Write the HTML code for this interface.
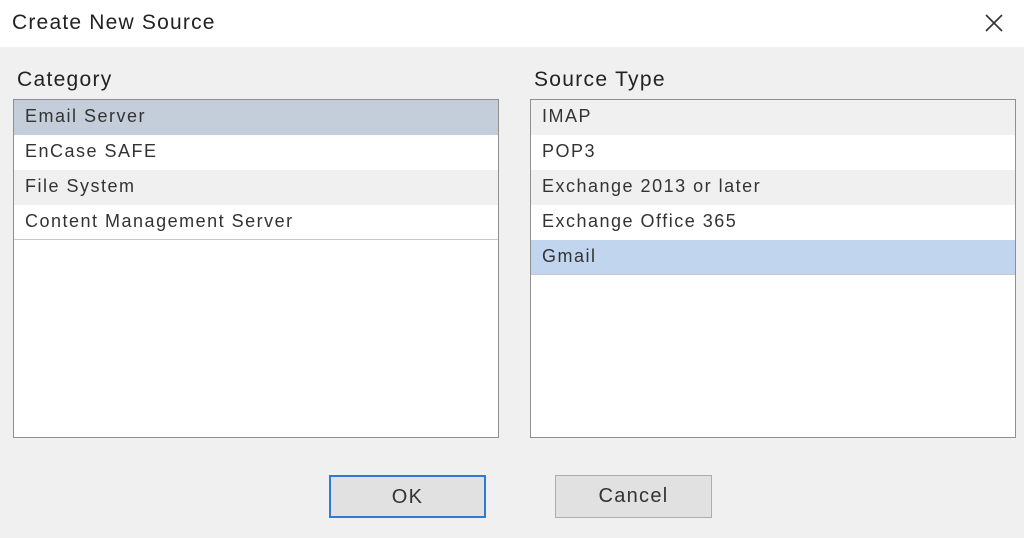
<!DOCTYPE html>
<html><head><style>
body{margin:0;width:1024px;height:538px;background:#f0f0f0;font-family:"Liberation Sans",sans-serif;color:#333;position:relative;overflow:hidden}
.title{position:absolute;left:0;top:0;width:1024px;height:47px;background:#fff}
.title span{position:absolute;left:12px;top:11px;font-size:21px;color:#222;letter-spacing:1.2px}
.x{position:absolute;left:983px;top:12px}
.lbl{position:absolute;font-size:21px;top:68px;color:#222;letter-spacing:1.3px}
.box{position:absolute;top:99px;height:339px;background:#fff;border:1px solid #8f8f8f;box-sizing:border-box}
.row{height:35px;line-height:33px;padding-left:11px;font-size:18px;letter-spacing:1.5px;color:#333}
.g{background:#f0f0f0}.sel{background:#c4cedb}.sel2{background:#c2d5ee}
.last{border-bottom:1px solid #c8c8c8;height:34px}
.btn{position:absolute;top:475px;width:157px;height:43px;box-sizing:border-box;text-align:center;line-height:40px;font-size:20px;letter-spacing:1.3px;color:#333;background:#e1e1e1}
</style></head><body>
<div class="title"><span>Create New Source</span>
<svg class="x" width="22" height="22" viewBox="0 0 22 22"><path d="M3 3L19 19M19 3L3 19" stroke="#333" stroke-width="1.6"/></svg></div>
<div class="lbl" style="left:17px">Category</div>
<div class="lbl" style="left:534px">Source Type</div>
<div class="box" style="left:13px;width:486px">
<div class="row sel">Email Server</div>
<div class="row">EnCase SAFE</div>
<div class="row g">File System</div>
<div class="row last">Content Management Server</div>
</div>
<div class="box" style="left:530px;width:486px">
<div class="row g">IMAP</div>
<div class="row">POP3</div>
<div class="row g">Exchange 2013 or later</div>
<div class="row">Exchange Office 365</div>
<div class="row sel2 last">Gmail</div>
</div>
<div class="btn" style="left:329px;border:2px solid #2b7cd3">OK</div>
<div class="btn" style="left:555px;border:1px solid #adadad">Cancel</div>
</body></html>
